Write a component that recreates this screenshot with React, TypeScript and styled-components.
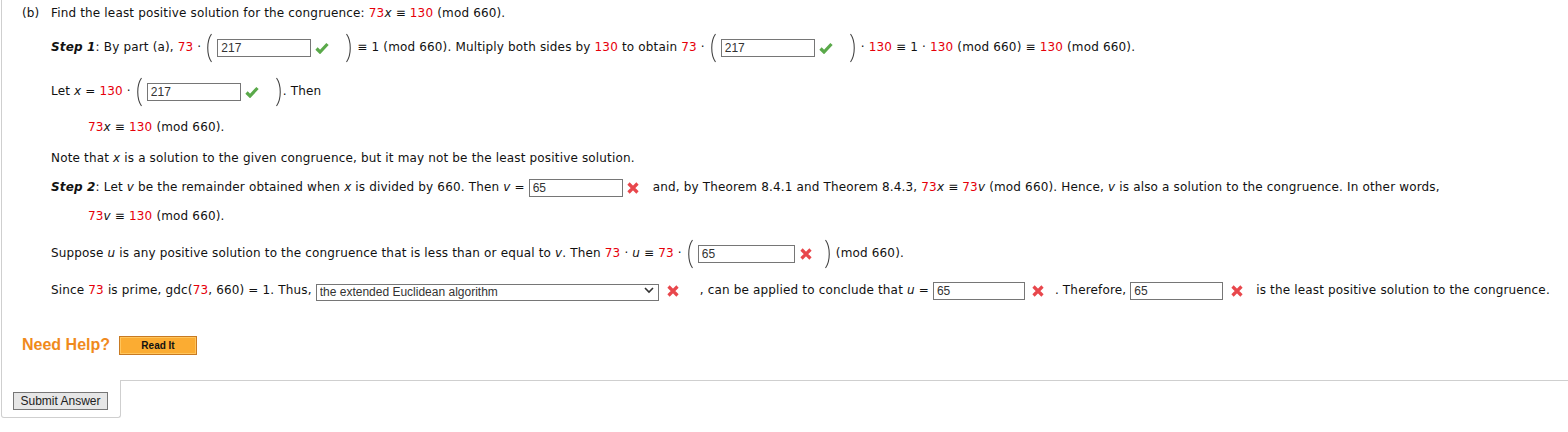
import React from "react";
import styled, { createGlobalStyle } from "styled-components";

const Global = createGlobalStyle`
  html, body { margin: 0; padding: 0; background: #fff; }
  body {
    font-family: "DejaVu Sans", Verdana, sans-serif;
    font-size: 12px;
    letter-spacing: 0.16px;
    color: #111;
  }
`;

const Page = styled.div`
  width: 1568px;
  height: 432px;
  padding-left: 1px;
  box-sizing: border-box;
  display: flex;
  flex-direction: column;
`;

const Panel = styled.div`
  height: 380px;
  box-sizing: border-box;
  border-left: 1px solid #cfcfcf;
  padding-top: 3px;
`;

const Row = styled.div<{ $top: number; $indent?: number }>`
  height: 20px;
  line-height: 20px;
  margin-top: ${(p) => p.$top}px;
  padding-left: ${(p) => p.$indent ?? 49}px;
  white-space: nowrap;
`;

const PartLabel = styled.span`
  display: inline-block;
  width: 29px;
`;

const StepLabel = styled.b`
  font-style: italic;
  font-weight: bold;
`;

const V = styled.i`
  font-style: italic;
`;

const R = styled.span`
  color: #e6000a;
`;

const Answer = styled.input.attrs({ readOnly: true })<{ $w?: number; $h?: number }>`
  width: ${(p) => p.$w ?? 94}px;
  height: ${(p) => p.$h ?? 18}px;
  box-sizing: border-box;
  margin: 0;
  padding: 0 3px;
  border: 1px solid #767676;
  border-radius: 0;
  font: 12px "Liberation Sans", Arial, sans-serif;
  letter-spacing: 0;
  color: #333;
  vertical-align: middle;
  background: #fff;
  outline: none;
`;

const SelectWrap = styled.span<{ $w: number }>`
  position: relative;
  display: inline-block;
  width: ${(p) => p.$w}px;
  height: 17px;
  vertical-align: middle;
`;

const Select = styled.select`
  appearance: none;
  width: 100%;
  height: 100%;
  box-sizing: border-box;
  margin: 0;
  padding: 0 3px;
  border: 1px solid #767676;
  border-radius: 0;
  background: #fff;
  font: 12px "Liberation Sans", Arial, sans-serif;
  letter-spacing: 0;
  color: #333;
  line-height: 15px;
`;

const Chevron = styled.svg`
  position: absolute;
  right: 5px;
  top: 5px;
  pointer-events: none;
`;

const Mark = styled.span<{ $l: number; $r: number }>`
  display: inline-block;
  margin-left: ${(p) => p.$l}px;
  margin-right: ${(p) => p.$r}px;
  vertical-align: middle;
  line-height: 0;
`;

const ParenBox = styled.svg<{ $l: number; $r: number }>`
  display: inline-block;
  vertical-align: middle;
  margin: -6px ${(p) => p.$r}px -6px ${(p) => p.$l}px;
`;

const HelpRow = styled.div`
  display: flex;
  align-items: center;
  height: 20px;
  margin-top: 35px;
  padding-left: 20px;
`;

const NeedHelp = styled.span`
  font: bold 16px "Liberation Sans", Arial, sans-serif;
  letter-spacing: 0;
  color: #f08a1c;
`;

const ReadIt = styled.button`
  margin-left: 9px;
  width: 78px;
  height: 19px;
  padding: 0;
  box-sizing: border-box;
  border: 1px solid #c87a22;
  background: #fbac32;
  box-shadow: inset 0 0 0 1px #ffc55c;
  font: bold 10px "Liberation Sans", Arial, sans-serif;
  letter-spacing: 0;
  color: #111;
`;

const BottomBar = styled.div`
  display: flex;
  height: 38px;
`;

const SubmitTab = styled.div`
  width: 120px;
  box-sizing: border-box;
  border: 1px solid #cfcfcf;
  border-top: none;
  border-radius: 0 0 3px 3px;
  padding: 12px 0 0 11px;
`;

const Filler = styled.div`
  flex: 1;
  border-top: 1px solid #cfcfcf;
`;

const SubmitButton = styled.button`
  width: 95px;
  height: 18px;
  box-sizing: border-box;
  padding: 0;
  border: 1px solid #767676;
  background: #e6e6e6;
  font: 12px "Liberation Sans", Arial, sans-serif;
  letter-spacing: 0;
  color: #222;
`;

function Paren({ close, l = 0, r = 0 }: { close?: boolean; l?: number; r?: number }) {
  return (
    <ParenBox $l={l} $r={r} width="8" height="30" viewBox="0 0 8 30">
      <path
        d={close ? "M1.5 1 C6.5 8 6.5 22 1.5 29" : "M6.5 1 C1.5 8 1.5 22 6.5 29"}
        fill="none"
        stroke="#444"
        strokeWidth="1.1"
      />
    </ParenBox>
  );
}

function Check({ l, r }: { l: number; r: number }) {
  return (
    <Mark $l={l} $r={r}>
      <svg width="14" height="12" viewBox="0 0 14 12">
        <path d="M1.5 6.5 L5 10 L12.5 2" fill="none" stroke="#5aa94a" strokeWidth="3.2" />
      </svg>
    </Mark>
  );
}

function Cross({ l, r }: { l: number; r: number }) {
  return (
    <Mark $l={l} $r={r}>
      <svg width="12" height="12" viewBox="0 0 12 12">
        <path d="M1.5 1.5 L10.5 10.5 M10.5 1.5 L1.5 10.5" fill="none" stroke="#e8474c" strokeWidth="3.2" />
      </svg>
    </Mark>
  );
}

export default function App() {
  return (
    <>
      <Global />
      <Page>
        <Panel>
          <Row $top={0} $indent={20}>
            <PartLabel>(b)</PartLabel>
            Find the least positive solution for the congruence: <R>73</R><V>x</V> ≡ <R>130</R> (mod 660).
          </Row>

          <Row $top={14}>
            <StepLabel>Step 1</StepLabel>: By part (a), <R>73</R> ·
            <Paren l={4} r={4} />
            <Answer defaultValue="217" />
            <Check l={4} r={16} />
            <Paren close />
            {" "}≡ 1 (mod 660). Multiply both sides by <R>130</R> to obtain <R>73</R> ·
            <Paren l={4} r={4} />
            <Answer defaultValue="217" />
            <Check l={4} r={16} />
            <Paren close />
            {" "}· <R>130</R> ≡ 1 · <R>130</R> (mod 660) ≡ <R>130</R> (mod 660).
          </Row>

          <Row $top={24}>
            Let <V>x</V> = <R>130</R> ·
            <Paren l={4} r={4} />
            <Answer defaultValue="217" />
            <Check l={4} r={16} />
            <Paren close />. Then
          </Row>

          <Row $top={16} $indent={86}>
            <R>73</R><V>x</V> ≡ <R>130</R> (mod 660).
          </Row>

          <Row $top={11}>
            Note that <V>x</V> is a solution to the given congruence, but it may not be the least positive solution.
          </Row>

          <Row $top={9}>
            <StepLabel>Step 2</StepLabel>: Let <V>v</V> be the remainder obtained when <V>x</V> is divided by 660. Then{" "}
            <V>v</V> = <Answer defaultValue="65" />
            <Cross l={4} r={10} /> and, by Theorem 8.4.1 and Theorem 8.4.3, <R>73</R><V>x</V> ≡ <R>73</R><V>v</V> (mod
            660). Hence, <V>v</V> is also a solution to the congruence. In other words,
          </Row>

          <Row $top={9} $indent={86}>
            <R>73</R><V>v</V> ≡ <R>130</R> (mod 660).
          </Row>

          <Row $top={17}>
            Suppose <V>u</V> is any positive solution to the congruence that is less than or equal to <V>v</V>. Then{" "}
            <R>73</R> · <V>u</V> ≡ <R>73</R> ·
            <Paren l={4} r={4} />
            <Answer $w={97} defaultValue="65" />
            <Cross l={5} r={12} />
            <Paren close /> (mod 660).
          </Row>

          <Row $top={17}>
            Since <R>73</R> is prime, gdc(<R>73</R>, 660) = 1. Thus,{" "}
            <SelectWrap $w={343}>
              <Select defaultValue="ext">
                <option value="ext">the extended Euclidean algorithm</option>
              </Select>
              <Chevron width="10" height="7" viewBox="0 0 10 7">
                <path d="M1 1 L5 5 L9 1" fill="none" stroke="#333" strokeWidth="1.6" />
              </Chevron>
            </SelectWrap>
            <Cross l={8} r={21} />, can be applied to conclude that <V>u</V> = <Answer $w={92} defaultValue="65" />
            <Cross l={7} r={11} />. Therefore, <Answer $w={93} defaultValue="65" />
            <Cross l={8} r={9} /> is the least positive solution to the congruence.
          </Row>

          <HelpRow>
            <NeedHelp>Need Help?</NeedHelp>
            <ReadIt>Read It</ReadIt>
          </HelpRow>
        </Panel>
        <BottomBar>
          <SubmitTab>
            <SubmitButton>Submit Answer</SubmitButton>
          </SubmitTab>
          <Filler />
        </BottomBar>
      </Page>
    </>
  );
}
